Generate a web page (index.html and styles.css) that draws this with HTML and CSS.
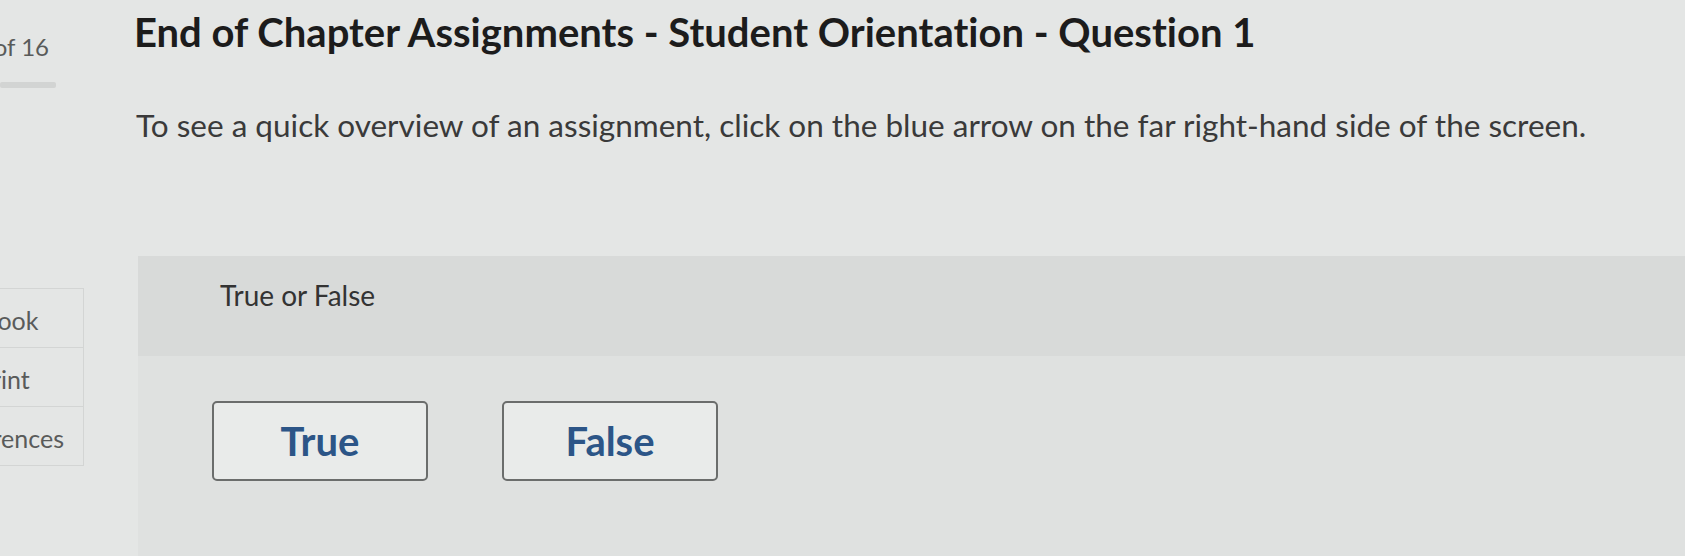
FILE: index.html
```html
<!DOCTYPE html>
<html lang="en">
<head>
<meta charset="UTF-8" />
<meta name="viewport" content="width=device-width, initial-scale=1" />
<title>End of Chapter Assignments - Question 1</title>
<link rel="stylesheet" href="styles.css">
</head>
<body>

<div class="page">
  <aside class="side">
    <div class="count">1 of 16</div>
    <div class="progress"></div>
    <ul class="tools">
      <li>eBook</li>
      <li>Print</li>
      <li>References</li>
    </ul>
  </aside>

  <main class="main">
    <h1>End of Chapter Assignments - Student Orientation - Question 1</h1>
    <p class="prompt">To see a quick overview of an assignment, click on the blue arrow on the far right-hand side of the screen.</p>

    <section class="question">
      <div class="q-head">True or False</div>
      <div class="q-body">
        <button class="answer-btn">True</button>
        <button class="answer-btn">False</button>
      </div>
    </section>
  </main>
</div>

</body>
</html>
```

FILE: styles.css
```css
html, body {
  margin: 0;
  height: 100%;
  overflow: hidden;
}
body {
  font-family: Lato, "Open Sans", Arial, sans-serif;
  font-variant-ligatures: none;
  background: #e4e6e5;
  color: #333;
}
.page {
  display: flex;
  align-items: flex-start;
}
.side {
  flex: 0 0 160px;
  margin-left: -76px;
  color: #595b5a;
}
.count {
  margin: 33px 35px 0 0;
  text-align: right;
  font-size: 24px;
  line-height: 1.2;
}
.progress {
  margin: 20px 28px 0 76px;
  height: 6px;
  background: #d2d4d3;
  border-radius: 2px;
}
.tools {
  list-style: none;
  margin: 200px 0 0 0;
  padding: 0;
  border: 1px solid #d3d5d4;
  border-left: none;
}
.tools li {
  height: 58px;
  line-height: 62px;
  text-align: center;
  font-size: 25px;
  border-bottom: 1px solid #d3d5d4;
}
.tools li:last-child {
  border-bottom: none;
}
.main {
  flex: 1;
  margin-left: 50px;
}
h1 {
  margin: 8px 0 0 0;
  font-size: 40px;
  line-height: 1.2;
  font-weight: 700;
  color: #1c1c1c;
}
.prompt {
  margin: 51px 0 0 2px;
  font-size: 31.5px;
  line-height: 1.2;
  color: #3a3a3a;
}
.question {
  margin: 111px 0 0 4px;
  min-height: 320px;
  background: #dfe1e0;
}
.q-head {
  height: 100px;
  box-sizing: border-box;
  padding: 23px 0 0 82px;
  font-size: 28px;
  line-height: 1.2;
  background: #d8dad9;
}
.q-body {
  display: flex;
  gap: 74px;
  padding: 45px 0 0 74px;
}
.answer-btn {
  width: 216px;
  height: 80px;
  background: #e9ebea;
  border: 2px solid #6b6d6c;
  border-radius: 5px;
  font-family: inherit;
  font-size: 40px;
  font-weight: 700;
  color: #2c5587;
  cursor: pointer;
}
.answer-btn:hover {
  background: #f2f4f3;
}
```
